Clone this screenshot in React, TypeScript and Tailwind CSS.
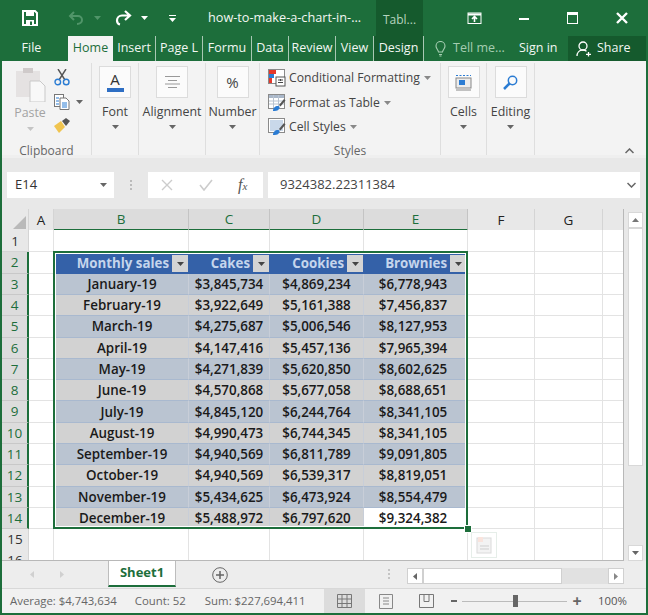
import React from 'react';

const rows = [
  ['January-19', '$3,845,734', '$4,869,234', '$6,778,943'],
  ['February-19', '$3,922,649', '$5,161,388', '$7,456,837'],
  ['March-19', '$4,275,687', '$5,006,546', '$8,127,953'],
  ['April-19', '$4,147,416', '$5,457,136', '$7,965,394'],
  ['May-19', '$4,271,839', '$5,620,850', '$8,602,625'],
  ['June-19', '$4,570,868', '$5,677,058', '$8,688,651'],
  ['July-19', '$4,845,120', '$6,244,764', '$8,341,105'],
  ['August-19', '$4,990,473', '$6,744,345', '$8,341,105'],
  ['September-19', '$4,940,569', '$6,811,789', '$9,091,805'],
  ['October-19', '$4,940,569', '$6,539,317', '$8,819,051'],
  ['November-19', '$5,434,625', '$6,473,924', '$8,554,479'],
  ['December-19', '$5,488,972', '$6,797,620', '$9,324,382'],
];

const gridCols = 'grid grid-cols-[27px_25px_135px_81px_94px_104px_67px_68px_21px]';

function Caret({ className = 'text-[#666]' }: { className?: string }) {
  return (
    <svg width="7" height="4" viewBox="0 0 7 4" className={className}>
      <path d="M0 0h7L3.5 4z" fill="currentColor" />
    </svg>
  );
}

function FilterButton() {
  return (
    <div className="flex h-[17px] w-[16px] shrink-0 items-center justify-center bg-[#d4d4d4]">
      <Caret className="text-[#444]" />
    </div>
  );
}

function RibbonButton({ label, children }: { label: string; children: React.ReactNode }) {
  return (
    <div className="flex flex-col items-center pt-[3px]">
      <div className="flex h-[32px] w-[32px] items-center justify-center border border-[#dcdcdc] bg-[#fbfbfb]">
        {children}
      </div>
      <div className="mt-[5px] text-[12.4px] leading-[18px] whitespace-nowrap text-[#444]">{label}</div>
      <div className="mt-[4px]">
        <Caret />
      </div>
    </div>
  );
}

function Group({ width, label, children }: { width: string; label?: string; children: React.ReactNode }) {
  return (
    <div className={`relative flex h-[92px] flex-col border-r border-[#dedede] ${width}`}>
      <div className="flex-1">{children}</div>
      {label && <div className="text-center text-[12px] leading-[8px] text-[#666]">{label}</div>}
    </div>
  );
}

function StyleIcon({ kind }: { kind: 'cond' | 'table' | 'cell' }) {
  return (
    <svg width="18" height="18" viewBox="0 0 18 18" className="shrink-0">
      <rect x="0.5" y="0.5" width="16" height="14" fill="#fff" stroke="#8a8a8a" />
      {kind === 'cond' && (
        <>
          <rect x="1" y="1" width="7" height="4" fill="#e5382b" />
          <rect x="1" y="5" width="5" height="4" fill="#2b7cd3" />
          <rect x="1" y="9" width="3" height="5" fill="#e5382b" />
          <rect x="8" y="8" width="9" height="9" fill="#fff" stroke="#555" />
          <path d="M10 11h5M10 13.5h5M12.5 10v2" stroke="#444" />
        </>
      )}
      {kind === 'table' && (
        <>
          <rect x="1" y="1" width="15" height="3" fill="#a9b7c9" />
          <path d="M1 7h15M1 10h15M5.5 1v13M10.5 1v13" stroke="#b9c3d0" />
        </>
      )}
      {kind === 'cell' && <rect x="2" y="2" width="13" height="11" fill="#c9d8ea" />}
      {kind !== 'cond' && (
        <>
          <path d="M11 11l5-6 1.5 1.5-5 6z" fill="#555" />
          <path d="M5 17c0-3 2-5 5-5 2 0 2 2 1 3-1 2-4 2-6 2z" fill="#2b7cd3" />
        </>
      )}
    </svg>
  );
}

function StyleRow({ kind, label }: { kind: 'cond' | 'table' | 'cell'; label: string }) {
  return (
    <div className="flex h-[24.5px] items-center gap-[3px]">
      <StyleIcon kind={kind} />
      <span className="text-[12.2px] whitespace-nowrap text-[#444]">{label}</span>
      <span className="ml-[1px]">
        <Caret className="text-[#888]" />
      </span>
    </div>
  );
}

function TitleBar() {
  return (
    <div className="flex h-[36px] items-center bg-[#1d6e3b] text-white">
      <div className="flex w-[40px] justify-end pr-[2px]">
        <svg width="16" height="16" viewBox="0 0 16 16">
          <path d="M1 1h12l2 2v12H1z" fill="none" stroke="#fff" strokeWidth="2" />
          <rect x="4" y="1" width="8" height="5" fill="#fff" />
          <rect x="4" y="10" width="8" height="5" fill="#fff" />
          <rect x="8" y="11.5" width="2" height="3.5" fill="#1d6e3b" />
        </svg>
      </div>
      <div className="ml-[28px] flex w-[46px] items-center gap-[10px] opacity-40">
        <svg width="16" height="16" viewBox="0 0 16 16" fill="none" stroke="#9ed0ae" strokeWidth="2">
          <path d="M6 2L2 6l4 4M2 6h8a4 4 0 014 4c0 2-2 4-5 4" />
        </svg>
        <Caret className="text-[#9ed0ae]" />
      </div>
      <div className="flex w-[48px] items-center gap-[9px]">
        <svg width="18" height="16" viewBox="0 0 18 16" fill="none" stroke="#fff" strokeWidth="2.2">
          <path d="M11 1l5 4.5-5 4.5M16 5.5H8a5 5 0 00-5 5c0 2 1 3.5 3 4" />
        </svg>
        <Caret className="text-white" />
      </div>
      <div className="flex w-[20px] flex-col items-center gap-[2px]">
        <div className="h-[1px] w-[7px] bg-white" />
        <Caret className="text-white" />
      </div>
      <div className="ml-[26px] w-[168px] text-[12.7px] font-medium whitespace-nowrap text-[#f2f7f3]">how-to-make-a-chart-in-...</div>
      <div className="flex h-full w-[47px] items-center justify-center bg-[#155a2d] pt-[4px] text-[12px] text-[#b5d4bf]">Tabl...</div>
      <div className="ml-[27px] flex w-[49px] justify-center">
        <svg width="15" height="13" viewBox="0 0 15 13" fill="none" stroke="#fff">
          <rect x="1" y="1" width="13" height="10.5" />
          <path d="M1 2.5h13" strokeWidth="2" />
          <path d="M7.5 10V5M5 7l2.5-2.5L10 7" strokeWidth="1.6" />
        </svg>
      </div>
      <div className="flex w-[49px] justify-center">
        <div className="mt-[2px] h-[2.5px] w-[10px] bg-white" />
      </div>
      <div className="flex w-[49px] justify-center">
        <div className="h-[12px] w-[11px] border border-t-[3px] border-white" />
      </div>
      <div className="flex w-[49px] justify-center">
        <svg width="12" height="12" viewBox="0 0 12 12" stroke="#fff" strokeWidth="2.4">
          <path d="M1 1l10 10M11 1L1 11" />
        </svg>
      </div>
    </div>
  );
}

function TabRow() {
  const tabs = [
    ['Insert', 'w-[43px]'],
    ['Page L', 'w-[47px]'],
    ['Formu', 'w-[49px]'],
    ['Data', 'w-[37px]'],
    ['Review', 'w-[47px]'],
    ['View', 'w-[38px]'],
  ];
  return (
    <div className="flex h-[25px] items-stretch bg-[#1d6e3b] text-[12.5px] text-[#f2f7f3]">
      <div className="flex w-[68px] items-center justify-center pr-[5px]">File</div>
      <div className="flex w-[45px] items-center justify-center bg-[#f3f3f3] text-[#1d6e3b]">Home</div>
      {tabs.map(([name, width]) => (
        <div key={name} className={`flex items-center justify-center border-r border-[#a9c8b4] whitespace-nowrap ${width}`}>
          {name}
        </div>
      ))}
      <div className="flex w-[50px] items-center justify-center border-r border-[#a9c8b4] bg-[#155a2d]">Design</div>
      <div className="flex w-[95px] items-center gap-[7px] pl-[11px] text-[#a5cdb1]">
        <svg width="11" height="16" viewBox="0 0 11 16" fill="none" stroke="#a5cdb1" strokeWidth="1.1">
          <path d="M3.5 11C3 8.5 1 7.500 1 5a4.500 4.500 0 019 0c0 2.500-2 3.500-2.500 6zM4 13.500h3M4.500 15h2" />
        </svg>
        <span className="whitespace-nowrap">Tell me...</span>
      </div>
      <div className="flex w-[49px] items-center whitespace-nowrap">Sign in</div>
      <div className="flex flex-1 items-center gap-[4px] bg-[#155a2d] pl-[8px]">
        <svg width="17" height="16" viewBox="0 0 17 16" fill="none" stroke="#fff" strokeWidth="1.3">
          <circle cx="7" cy="5" r="4" />
          <path d="M1 15c0-3 2-6 6-6 1.500 0 2.500.5 3.500 1.300M12.500 11v4.500M10 13.300h5" />
        </svg>
        <span>Share</span>
      </div>
    </div>
  );
}

function Ribbon() {
  return (
    <div className="flex h-[97px] bg-[#f3f3f3] pt-[2px] shadow-[inset_0_-3px_0_#efefef]">
      <Group width="w-[90px]" label="Clipboard">
        <div className="flex h-full">
          <div className="flex w-[48px] flex-col items-center pt-[5px] pl-[8px]">
            <svg width="31" height="34" viewBox="0 0 31 34">
              <rect x="1" y="3" width="24" height="26" fill="#e5e2e2" />
              <rect x="8" y="0" width="10" height="5" fill="#cfcaca" />
              <path d="M15 13h10l5 5v16H15z" fill="#f8f8f8" stroke="#c9c9c9" />
            </svg>
            <div className="mt-[2px] text-[12.4px] leading-[18px] text-[#a3a3a3]">Paste</div>
            <div className="mt-[5px]">
              <Caret className="text-[#c4c4c4]" />
            </div>
          </div>
          <div className="flex flex-col gap-[8px] pt-[6px] pl-[4px]">
            <svg width="16" height="17" viewBox="0 0 16 17" fill="none">
              <path d="M4 0l7 11M12 0L5 11" stroke="#555" strokeWidth="1.4" />
              <circle cx="3.800" cy="13" r="2.800" stroke="#2b7cd3" strokeWidth="1.4" />
              <circle cx="12.200" cy="13" r="2.800" stroke="#2b7cd3" strokeWidth="1.4" />
            </svg>
            <div className="flex items-center gap-[6px]">
              <svg width="16" height="16" viewBox="0 0 16 16" fill="#fff" stroke="#777">
                <rect x="0.500" y="0.500" width="9" height="12" />
                <path d="M6 4h6l3 3v8.500H6z" />
                <path d="M2 4h3M2 7h3M2 10h3M8 9h5M8 11h5M8 13h5" stroke="#2b7cd3" />
              </svg>
              <Caret />
            </div>
            <svg width="16" height="15" viewBox="0 0 16 15">
              <path d="M0 8l7-5 4 6-6 6z" fill="#f0c44f" />
              <path d="M8 3l4-3 4 3-4 5z" fill="#555" />
            </svg>
          </div>
        </div>
      </Group>
      <Group width="w-[47px]">
        <RibbonButton label="Font">
          <div className="flex flex-col items-center">
            <span className="text-[15px] leading-[15px] text-[#333]">A</span>
            <div className="mt-[1px] h-[4px] w-[17px] bg-[#2f6fc4]" />
          </div>
        </RibbonButton>
      </Group>
      <Group width="w-[67px]">
        <RibbonButton label="Alignment">
          <svg width="15" height="12" viewBox="0 0 15 12" stroke="#999">
            <path d="M0 .5h15M3 4.500h9M0 8h15M3 11.500h9" />
          </svg>
        </RibbonButton>
      </Group>
      <Group width="w-[54px]">
        <RibbonButton label="Number">
          <span className="text-[15px] text-[#444]">%</span>
        </RibbonButton>
      </Group>
      <Group width="w-[181px]" label="Styles">
        <div className="pt-[3px] pl-[8px]">
          <StyleRow kind="cond" label="Conditional Formatting" />
          <StyleRow kind="table" label="Format as Table" />
          <StyleRow kind="cell" label="Cell Styles" />
        </div>
      </Group>
      <Group width="w-[46px]">
        <RibbonButton label="Cells">
          <svg width="17" height="17" viewBox="0 0 17 17" fill="none">
            <path d="M1 1.500h15" stroke="#2b7cd3" strokeDasharray="2 1.500" />
            <rect x="1" y="4" width="15" height="10" fill="#ececec" stroke="#888" />
            <rect x="4" y="6" width="6" height="5" fill="#2b7cd3" />
            <path d="M1 16h15" stroke="#888" />
          </svg>
        </RibbonButton>
      </Group>
      <Group width="w-[48px]">
        <RibbonButton label="Editing">
          <svg width="15" height="15" viewBox="0 0 15 15" fill="none" stroke="#2b7cd3">
            <circle cx="9.500" cy="5.500" r="4.200" strokeWidth="1.500" />
            <path d="M6.500 8.500L1 14" strokeWidth="2.500" />
          </svg>
        </RibbonButton>
      </Group>
      <div className="flex flex-1 items-end justify-end pr-[12px] pb-[4px]">
        <svg width="9" height="6" viewBox="0 0 9 6" fill="none" stroke="#666" strokeWidth="1.500">
          <path d="M.5 5l4-4 4 4" />
        </svg>
      </div>
    </div>
  );
}

function FormulaBar() {
  return (
    <div className="flex h-[51px] items-start bg-[#e8e8e8] pt-[14px] pr-[6px] pl-[5px]">
      <div className="flex h-[26px] w-[107px] items-center justify-between bg-white pr-[7px] pl-[8px] text-[13px] text-[#333]">
        <span>E14</span>
        <Caret />
      </div>
      <div className="flex h-[26px] w-[34px] flex-col items-center justify-center gap-[2px]">
        <div className="h-[2px] w-[2px] bg-[#bbb]" />
        <div className="h-[2px] w-[2px] bg-[#bbb]" />
        <div className="h-[2px] w-[2px] bg-[#bbb]" />
      </div>
      <div className="flex h-[26px] w-[115px] items-center bg-white pl-[13px]">
        <svg width="12" height="12" viewBox="0 0 12 12" stroke="#ccc" strokeWidth="1.400">
          <path d="M1 1l10 10M11 1L1 11" />
        </svg>
        <svg width="14" height="12" viewBox="0 0 14 12" fill="none" stroke="#ccc" strokeWidth="1.600" className="ml-[26px]">
          <path d="M1 6l4 5 8-10" />
        </svg>
        <span className="ml-[25px] font-['Liberation_Serif',serif] text-[16px] text-[#555] italic">
          f<span className="text-[11px]">x</span>
        </span>
      </div>
      <div className="ml-[5px] flex h-[26px] flex-1 items-center justify-between bg-white pr-[4px] pl-[12px] text-[13px] text-[#444]">
        <span>9324382.22311384</span>
        <svg width="9" height="6" viewBox="0 0 9 6" fill="none" stroke="#666" strokeWidth="1.500">
          <path d="M.5 1l4 4 4-4" />
        </svg>
      </div>
    </div>
  );
}

function RowHeader({ n, active }: { n: number; active?: boolean }) {
  return (
    <div
      className={`flex items-center justify-center border-b text-[13.5px] ${
        active
          ? 'border-[#c8c8c8] border-r-2 border-r-[#1d6e3b] bg-[#dcdcdc] text-[#1d6e3b]'
          : 'border-r border-[#d4d4d4] bg-[#e8e8e8] text-[#333]'
      }`}
    >
      {n}
    </div>
  );
}

function Blank() {
  return <div className="border-r border-b border-[#e3e3e3] bg-white" />;
}

function HeaderCell({ label, last }: { label: string; last?: boolean }) {
  return (
    <div className={`flex items-center justify-end gap-[3px] bg-[#3461a8] pt-[1px] text-[13.3px] font-bold whitespace-nowrap text-[#c5d5ec] ${last ? 'pr-[2px]' : 'pr-[1px]'}`}>
      {label} <FilterButton />
    </div>
  );
}

function Sheet() {
  const cols = ['B', 'C', 'D', 'E'];
  const plain = 'flex items-center justify-center border-r border-[#d4d4d4] bg-[#e8e8e8] text-[13.5px] font-medium text-[#222]';
  return (
    <div className="flex h-[352px] bg-[#e8e8e8]">
      <div className="relative h-[352px] w-[622px] overflow-hidden border-r border-b border-[#b8b8b8] bg-white">
        <div className={`${gridCols} h-[21px]`}>
          <div className="flex items-end justify-end border-r border-[#d4d4d4] bg-[#e8e8e8] pr-[2px] pb-[2px]">
            <svg width="13" height="13" viewBox="0 0 13 13">
              <path d="M13 0v13H0z" fill="#b9b9b9" />
            </svg>
          </div>
          <div className={plain}>A</div>
          {cols.map((c) => (
            <div key={c} className="flex items-center justify-center border-r border-b-2 border-[#c4c4c4] border-b-[#1d6e3b] bg-[#dcdcdc] text-[13.5px] text-[#1d6e3b]">
              {c}
            </div>
          ))}
          <div className={plain}>F</div>
          <div className={plain}>G</div>
          <div className="bg-[#e8e8e8]" />
        </div>

        <div className={`${gridCols} h-[22.4px]`}>
          <RowHeader n={1} />
          {Array.from({ length: 8 }, (_, i) => <Blank key={i} />)}
        </div>

        <div className={`${gridCols} h-[21.3px]`}>
          <RowHeader n={2} active />
          <Blank />
          <HeaderCell label="Monthly sales" />
          <HeaderCell label="Cakes" />
          <HeaderCell label="Cookies" />
          <HeaderCell label="Brownies" last />
          <Blank />
          <Blank />
          <Blank />
        </div>

        {rows.map((row, i) => (
          <div key={row[0]} className={`${gridCols} h-[21.3px]`}>
            <RowHeader n={i + 3} active />
            <Blank />
            {row.map((val, j) => {
              const last = i === rows.length - 1 && j === 3;
              const band = i % 2 === 0 ? 'bg-[#bac4d1]' : 'bg-[#d2d2d2]';
              return (
                <div
                  key={j}
                  className={`flex items-center justify-center border-r border-b border-[#c8ced8] border-b-[#a9b9cf] text-[13.4px] font-semibold whitespace-nowrap text-[#1a1a1a] ${
                    last ? 'bg-white font-normal' : band
                  } ${j === 0 ? 'pl-[2px]' : ''} ${j === 3 ? 'pr-[5px]' : ''}`}
                >
                  {val}
                </div>
              );
            })}
            <Blank />
            <Blank />
            <Blank />
          </div>
        ))}

        <div className={`${gridCols} h-[21px]`}>
          <RowHeader n={15} />
          {Array.from({ length: 8 }, (_, i) => <Blank key={i} />)}
        </div>
        <div className={`${gridCols} h-[21px]`}>
          <RowHeader n={16} />
          {Array.from({ length: 8 }, (_, i) => <Blank key={i} />)}
        </div>

        {/* selection */}
        <div className="absolute top-[42px] left-[51px] h-[278px] w-[415px] border-2 border-[#1d6e3b] shadow-[inset_0_0_0_1px_#fff]" />
        <div className="absolute top-[317px] left-[463px] h-[6px] w-[6px] bg-[#1d6e3b] outline outline-white" />
        {/* quick analysis */}
        <div className="absolute top-[323px] left-[469px] flex h-[26px] w-[26px] items-center justify-center border border-[#dce8e0] bg-white opacity-70">
          <svg width="16" height="18" viewBox="0 0 16 18" fill="none">
            <rect x="1" y="2" width="14" height="15" fill="#eee" stroke="#ccc" />
            <rect x="2" y="1" width="5" height="5" fill="#f7d9cf" />
            <path d="M4 10h9M4 13h9" stroke="#bbb" />
          </svg>
        </div>
      </div>

      <div className="flex w-[22px] flex-col items-center pt-[3px]">
        <div className="flex h-[16px] w-[15px] items-center justify-center border border-[#d8d8d8] bg-white">
          <svg width="7" height="4" viewBox="0 0 7 4"><path d="M0 4h7L3.500 0z" fill="#777" /></svg>
        </div>
        <div className="h-[238px] w-[15px] border border-[#d8d8d8] bg-white" />
        <div className="flex-1" />
        <div className="flex h-[16px] w-[15px] items-center justify-center border border-[#d8d8d8] bg-white">
          <Caret />
        </div>
      </div>
    </div>
  );
}

function SheetTabs() {
  return (
    <div className="flex h-[27px] items-start bg-[#ededed]">
      <div className="flex w-[106px] items-center gap-[26px] pt-[10px] pl-[28px]">
        <svg width="4" height="7" viewBox="0 0 4 7"><path d="M4 0v7L0 3.500z" fill="#d0d0d0" /></svg>
        <svg width="4" height="7" viewBox="0 0 4 7"><path d="M0 0v7l4-3.500z" fill="#d0d0d0" /></svg>
      </div>
      <div className="flex h-[26px] w-[68px] items-center justify-center border-x border-b-2 border-x-[#bdbdbd] border-b-[#1d6e3b] bg-white text-[13px] font-bold text-[#1d6e3b]">
        Sheet1
      </div>
      <div className="flex w-[88px] justify-center pt-[6px]">
        <svg width="16" height="16" viewBox="0 0 16 16" fill="none" stroke="#666">
          <circle cx="8" cy="8" r="7.300" />
          <path d="M8 4v8M4 8h8" strokeWidth="1.500" />
        </svg>
      </div>
      <div className="ml-[124px] flex flex-col gap-[2px] pt-[8px]">
        <div className="h-[2px] w-[2px] bg-[#c4c4c4]" />
        <div className="h-[2px] w-[2px] bg-[#c4c4c4]" />
        <div className="h-[2px] w-[2px] bg-[#c4c4c4]" />
      </div>
      <div className="mt-[7px] ml-[17px] flex h-[16px] w-[217px] items-stretch bg-[#e1e1e1]">
        <div className="flex w-[16px] items-center justify-center border border-[#d0d0d0] bg-white">
          <svg width="4" height="7" viewBox="0 0 4 7"><path d="M4 0v7L0 3.500z" fill="#666" /></svg>
        </div>
        <div className="w-[139px] border border-[#d0d0d0] bg-white" />
        <div className="flex-1" />
        <div className="flex w-[16px] items-center justify-center border border-[#d0d0d0] bg-white">
          <svg width="4" height="7" viewBox="0 0 4 7"><path d="M0 0v7l4-3.500z" fill="#888" /></svg>
        </div>
      </div>
    </div>
  );
}

function StatusBar() {
  return (
    <div className="flex h-[25px] items-stretch border-t border-[#d8d8d8] bg-[#f1f1f1] text-[11.4px] text-[#666]">
      <div className="flex w-[322px] items-center whitespace-nowrap pl-[8px]">
        <span>Average: $4,743,634</span>
        <span className="ml-[18px]">Count: 52</span>
        <span className="ml-[19px]">Sum: $227,694,411</span>
      </div>
      <div className="flex w-[41px] items-center justify-center bg-[#dcdcdc]">
        <svg width="15" height="14" viewBox="0 0 15 14" fill="none" stroke="#777">
          <path d="M.5.5h14v13H.5zM.5 5h14M.5 9.500h14M5 .5v13M10 .5v13" />
        </svg>
      </div>
      <div className="flex w-[41px] items-center justify-center">
        <svg width="14" height="15" viewBox="0 0 14 15" fill="none" stroke="#888">
          <path d="M.5.5h13v14H.5zM4 4h6M4 7h6M4 10h6" />
        </svg>
      </div>
      <div className="flex w-[40px] items-center justify-center">
        <svg width="15" height="14" viewBox="0 0 15 14" fill="none" stroke="#777">
          <path d="M.5.5h14v13H.5zM5 .5v7h5v-7" />
        </svg>
      </div>
      <div className="flex w-[16px] items-center justify-end pr-[5px]">
        <div className="h-[2px] w-[6px] bg-[#666]" />
      </div>
      <div className="relative flex w-[105px] items-center">
        <div className="h-[1px] w-full bg-[#bbb]" />
        <div className="absolute left-[51px] h-[12px] w-[5px] bg-[#666]" />
      </div>
      <div className="flex w-[20px] items-center justify-center text-[16px] font-bold text-[#666]">+</div>
      <div className="flex items-center pl-[11px] text-[#555]">100%</div>
    </div>
  );
}

export default function App() {
  return (
    <div className="flex h-[615px] w-[648px] flex-col overflow-hidden border-x-2 border-b-2 border-[#1d6e3b] font-['Open_Sans',sans-serif]">
      <div className="-mx-[2px]">
        <TitleBar />
        <TabRow />
      </div>
      <Ribbon />
      <FormulaBar />
      <Sheet />
      <SheetTabs />
      <StatusBar />
    </div>
  );
}
